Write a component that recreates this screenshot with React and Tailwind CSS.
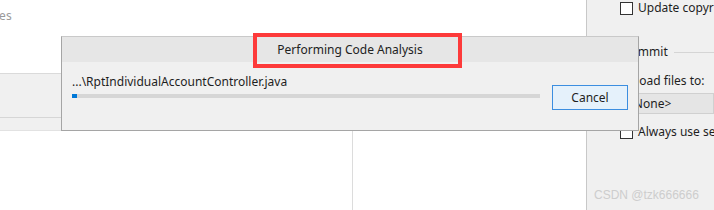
const font = { fontFamily: '"Noto Sans", "Open Sans", sans-serif' };

const Checkbox = () => (
  <span className="block w-[13px] h-[13px] border border-[#333] bg-white shrink-0" />
);

const App = () => {
  return (
    <div className="relative w-[714px] h-[210px] overflow-hidden bg-white text-[12px] text-[#1e1e1e]" style={font}>
      <div className="flex h-full">
        {/* left, editor-ish area */}
        <div className="w-[587px] shrink-0 flex flex-col border-r border-[#c8c8c8]">
          <div className="h-[73px] pt-[7px] text-[#9a9a9a] -ml-[15px]">ages</div>
          <div className="h-[58px] bg-[#f0f0f0] border-t border-[#dadada] flex flex-col">
            <div className="h-[44px] border-b border-[#d6d6d6]" />
            <div className="flex-1 border-b border-[#e2e2e2]" />
          </div>
          <div className="flex-1 flex">
            <div className="w-[353px] border-r border-[#dcdcdc]" />
          </div>
        </div>

        {/* right settings panel */}
        <div className="flex-1 min-w-0 overflow-hidden bg-[#f0f0f0] pl-[33px] flex flex-col">
          <div className="flex items-center gap-[5px] h-[16px] mt-0">
            <Checkbox />
            <span className="whitespace-nowrap">Update copyright</span>
          </div>
          <div className="flex items-center mt-[28px] h-[16px]">
            <span className="whitespace-nowrap pl-[3px]">Commit</span>
            <span className="flex-1 ml-[6px] border-t border-[#d5d5d5]" />
          </div>
          <div className="mt-[12px] h-[16px] pl-[0px] whitespace-nowrap">Upload files to:</div>
          <div className="mt-[5px] ml-[4px] h-[21px] bg-[#e5e5e5] border border-[#d0d0d0] flex items-center pl-[2px] whitespace-nowrap">
            &lt;None&gt;
          </div>
          <div className="flex items-center gap-[5px] h-[16px] mt-[10px]">
            <Checkbox />
            <span className="whitespace-nowrap">Always use selected server</span>
          </div>
        </div>
      </div>

      {/* watermark */}
      <div className="absolute left-[594px] top-[186px] text-[12px] text-[#cdcdcd] whitespace-nowrap" style={{ fontFamily: '"Liberation Sans", sans-serif' }}>
        CSDN @tzk666666
      </div>

      {/* progress dialog */}
      <div className="absolute left-[61px] top-[36px] w-[578px] h-[95px] bg-[#f0f0f0] border border-[#a5a5a5] border-t-[#c9c9c9] flex flex-col">
        <div className="h-[25px] bg-[#e6e6e6] flex items-center justify-center text-[#222]">
          Performing Code Analysis
        </div>
        <div className="flex-1 flex pl-[10px] pr-[10px]">
          <div className="flex-1 pt-[12px]">
            <div className="leading-[16px] whitespace-nowrap">...\RptIndividualAccountController.java</div>
            <div className="mt-[4px] w-[468px] h-[4px] bg-[#d6d6d6]">
              <div className="w-[5px] h-full bg-[#0078d7]" />
            </div>
          </div>
          <button className="mt-[23px] w-[76px] h-[25px] bg-[#e5f1fb] border border-[#3c8ee0] text-[#1e1e1e] text-[12px] leading-none">
            Cancel
          </button>
        </div>

        {/* red highlight around the title */}
        <div className="absolute left-[191px] top-[-4px] w-[209px] h-[35px] border-[4px] border-[#fd3a3a]" />
      </div>
    </div>
  );
};

export default App;
